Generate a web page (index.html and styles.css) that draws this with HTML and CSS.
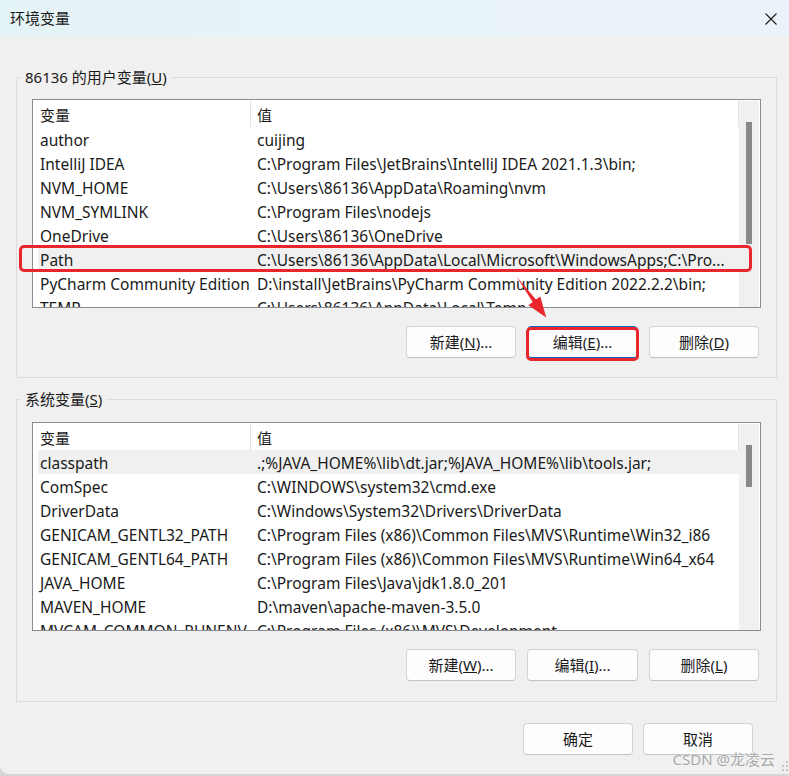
FILE: index.html
```html
<!DOCTYPE html>
<html lang="zh-CN">
<head>
  <meta charset="UTF-8">
  <title>环境变量</title>
  <link rel="stylesheet" href="styles.css">
</head>
<body>
  <div class="dialog">
    <div class="titlebar">
      <span class="title">环境变量</span>
      <svg class="close" width="12" height="12" viewBox="0 0 12 12"><path d="M0.5 0.5L11.5 11.5M11.5 0.5L0.5 11.5" stroke="#1a1a1a" stroke-width="1.1" fill="none"/></svg>
    </div>

    <!-- 用户变量 -->
    <fieldset class="group">
      <legend>86136 的用户变量(<u>U</u>)</legend>
      <div class="list">
        <div class="table">
          <div class="row head"><span class="name">变量</span><span class="value">值</span></div>
          <div class="row"><span class="name">author</span><span class="value">cuijing</span></div>
          <div class="row"><span class="name">IntelliJ IDEA</span><span class="value">C:\Program Files\JetBrains\IntelliJ IDEA 2021.1.3\bin;</span></div>
          <div class="row"><span class="name">NVM_HOME</span><span class="value">C:\Users\86136\AppData\Roaming\nvm</span></div>
          <div class="row"><span class="name">NVM_SYMLINK</span><span class="value">C:\Program Files\nodejs</span></div>
          <div class="row"><span class="name">OneDrive</span><span class="value">C:\Users\86136\OneDrive</span></div>
          <div class="row selected"><span class="name">Path</span><span class="value">C:\Users\86136\AppData\Local\Microsoft\WindowsApps;C:\Pro...</span></div>
          <div class="row"><span class="name">PyCharm Community Edition</span><span class="value">D:\install\JetBrains\PyCharm Community Edition 2022.2.2\bin;</span></div>
          <div class="row"><span class="name">TEMP</span><span class="value">C:\Users\86136\AppData\Local\Temp</span></div>
        </div>
        <div class="scroll"><div class="thumb thumb-long"></div></div>
        <span class="mark mark-row"></span>
      </div>
      <div class="buttons">
        <button class="btn">新建(<u>N</u>)...</button>
        <button class="btn focused">编辑(<u>E</u>)...<span class="mark mark-btn"></span></button>
        <button class="btn">删除(<u>D</u>)</button>
      </div>
    </fieldset>

    <!-- 系统变量 -->
    <fieldset class="group second">
      <legend>系统变量(<u>S</u>)</legend>
      <div class="list">
        <div class="table">
          <div class="row head"><span class="name">变量</span><span class="value">值</span></div>
          <div class="row selected"><span class="name">classpath</span><span class="value">.;%JAVA_HOME%\lib\dt.jar;%JAVA_HOME%\lib\tools.jar;</span></div>
          <div class="row"><span class="name">ComSpec</span><span class="value">C:\WINDOWS\system32\cmd.exe</span></div>
          <div class="row"><span class="name">DriverData</span><span class="value">C:\Windows\System32\Drivers\DriverData</span></div>
          <div class="row"><span class="name">GENICAM_GENTL32_PATH</span><span class="value">C:\Program Files (x86)\Common Files\MVS\Runtime\Win32_i86</span></div>
          <div class="row"><span class="name">GENICAM_GENTL64_PATH</span><span class="value">C:\Program Files (x86)\Common Files\MVS\Runtime\Win64_x64</span></div>
          <div class="row"><span class="name">JAVA_HOME</span><span class="value">C:\Program Files\Java\jdk1.8.0_201</span></div>
          <div class="row"><span class="name">MAVEN_HOME</span><span class="value">D:\maven\apache-maven-3.5.0</span></div>
          <div class="row"><span class="name">MVCAM_COMMON_RUNENV</span><span class="value">C:\Program Files (x86)\MVS\Development</span></div>
        </div>
        <div class="scroll"><div class="thumb thumb-short"></div></div>
      </div>
      <div class="buttons">
        <button class="btn">新建(<u>W</u>)...</button>
        <button class="btn">编辑(<u>I</u>)...</button>
        <button class="btn">删除(<u>L</u>)</button>
      </div>
    </fieldset>

    <div class="footer">
      <button class="btn">确定</button>
      <button class="btn">取消</button>
    </div>

    <!-- 标注箭头 -->
    <svg class="arrow" width="40" height="50" viewBox="510 270 40 50">
      <polygon points="516.5,276.5 532.7,302 528.4,305.2 546.2,317.4 540.3,296.4 535.9,299.6" fill="#e8262b"/>
    </svg>

    <span class="watermark">CSDN @龙凌云</span>
    <svg class="grip" width="10" height="12" viewBox="0 0 10 12">
      <rect x="7" y="1" width="2" height="2" fill="#c4c4c4"/>
      <rect x="7" y="5" width="2" height="2" fill="#c4c4c4"/>
      <rect x="3" y="5" width="2" height="2" fill="#c4c4c4"/>
      <rect x="7" y="9" width="2" height="2" fill="#c4c4c4"/>
      <rect x="3" y="9" width="2" height="2" fill="#c4c4c4"/>
    </svg>
  </div>
</body>
</html>
```

FILE: styles.css
```css
body { margin: 0; background: #d6d6d6; font-family: "Noto Sans", "Noto Sans CJK SC", sans-serif; font-size: 15px; color: #1a1a1a; }
.dialog { position: relative; width: 789px; height: 774px; background: #f0f0f0; border-bottom-left-radius: 8px; box-shadow: 0 1px 0 #c6c6c6; overflow: hidden; }

.titlebar { height: 37px; display: flex; align-items: center; justify-content: space-between; padding: 0 12px 0 10px; background: linear-gradient(to right, #e4f3f5, #ebf3fa); }
.title { font-size: 15px; line-height: 20px; margin-top: -2px; }
.close { display: block; }

.group { margin: 30px 12px 0 16px; padding: 12px 15px 19px; border: 1px solid #dcdcdc; min-width: 0; }
.group.second { margin-top: 11px; padding-top: 13px; padding-bottom: 20px; }
.group legend { display: block; height: 20px; margin-left: -11px; padding: 0 4px; line-height: 20px; }

.list { position: relative; display: flex; height: 206px; padding: 1px 1px 0 5px; background: #fff; border: 1px solid #8b8b93; }
.table { width: 701px; overflow: hidden; font-size: 15.5px; }
.row { display: grid; grid-template-columns: 213px 1fr; height: 24px; line-height: 26px; white-space: nowrap; }
.row .name { height: 24px; padding-left: 2px; overflow: hidden; }
.row .value { height: 24px; padding-left: 6px; overflow: hidden; }
.row.head { height: 26px; line-height: 24px; }
.row.head .name, .row.head .value { height: 24px; border-right: 1px solid #e3e3e3; padding-top: 2px; font-size: 15px; }
.row.selected { background: #f0f0f0; }

.scroll { width: 20px; background: #f0f0f0; }
.thumb { width: 6px; margin: 21px 0 0 7px; background: #898989; }
.thumb-long { height: 122px; }
.thumb-short { height: 42px; }

.buttons { display: flex; justify-content: flex-end; gap: 11px; margin-top: 18px; padding-right: 2px; }
.btn { position: relative; width: 110px; height: 32px; padding: 0; background: #fdfdfd; border: 1px solid #d3d3d3; border-bottom-color: #c2c2c2; border-radius: 4px; font: inherit; color: #1a1a1a; line-height: 30px; }
.btn.focused { border-color: #0067c0; }
.buttons .btn:nth-child(2) { width: 111px; }

.mark { position: absolute; border: 3px solid #e8262b; border-radius: 5px; pointer-events: none; }
.mark-row { left: -14px; top: 145px; width: 727px; height: 21px; }
.mark-btn { left: -2px; top: 0px; width: 107px; height: 28px; }

.arrow { position: absolute; left: 510px; top: 270px; }

.footer { display: flex; justify-content: flex-end; gap: 10px; margin-top: 21px; padding-right: 36px; }

.watermark { position: absolute; right: 14px; top: 749px; font-size: 15px; line-height: 20px; color: #a8a8a8; text-shadow: 0 0 2px #fff; }
.grip { position: absolute; right: 0; top: 760px; }
```
